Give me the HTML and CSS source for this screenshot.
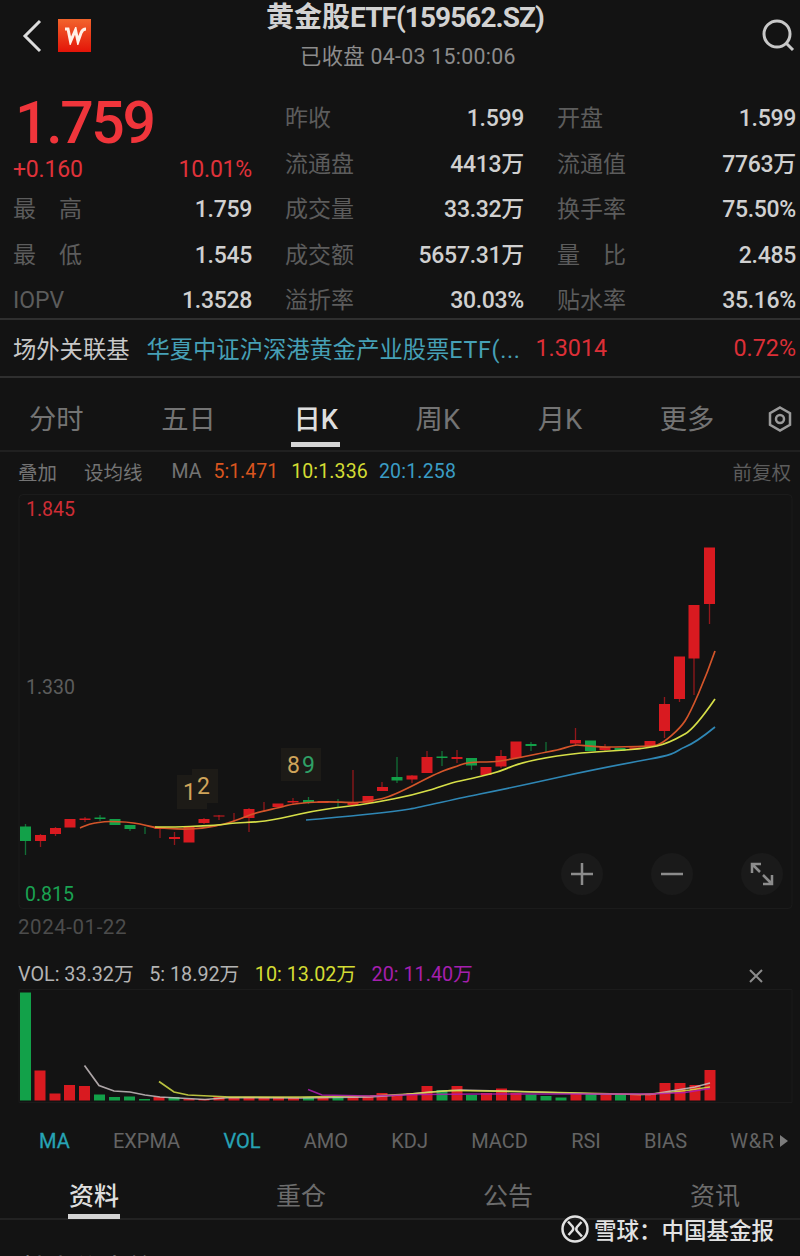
FILE: index.html
```html
<!DOCTYPE html>
<html lang="zh-CN">
<head>
    <meta charset="UTF-8">
    <title>黄金股ETF(159562.SZ)</title>
    <link rel="stylesheet" href="styles.css">
</head>
<body>

<header class="topbar">
    <div class="topbar-left">
        <svg class="back" width="20" height="34" viewBox="0 0 20 34"><path d="M18 2 3 17 18 32"/></svg>
        <div class="logo">
            <svg width="24" height="18" viewBox="0 0 24 18"><path d="M2 2H5L7.500 14.500 12.500 3 15 14.500 18 6Q19.500 2 23 2"/></svg>
        </div>
    </div>
    <div class="topbar-title">
        <h1>黄金股<span>ETF(159562.SZ)</span></h1>
        <p>已收盘 04-03 15:00:06</p>
    </div>
    <svg class="search" width="34" height="34" viewBox="0 0 34 34"><circle cx="15" cy="15" r="13"/><path d="M24 24 31 31"/></svg>
</header>

<section class="quote">
    <div class="col">
        <div class="price">1.759</div>
        <div class="row change"><span>+0.160</span><span>10.01%</span></div>
        <div class="row"><label class="wide2"><i>最</i><i>高</i></label><b>1.759</b></div>
        <div class="row"><label class="wide2"><i>最</i><i>低</i></label><b>1.545</b></div>
        <div class="row"><label>IOPV</label><b>1.3528</b></div>
    </div>
    <div class="col">
        <div class="row"><label>昨收</label><b>1.599</b></div>
        <div class="row"><label>流通盘</label><b>4413万</b></div>
        <div class="row"><label>成交量</label><b>33.32万</b></div>
        <div class="row"><label>成交额</label><b>5657.31万</b></div>
        <div class="row"><label>溢折率</label><b>30.03%</b></div>
    </div>
    <div class="col">
        <div class="row"><label>开盘</label><b>1.599</b></div>
        <div class="row"><label>流通值</label><b>7763万</b></div>
        <div class="row"><label>换手率</label><b>75.50%</b></div>
        <div class="row"><label class="wide2"><i>量</i><i>比</i></label><b>2.485</b></div>
        <div class="row"><label>贴水率</label><b>35.16%</b></div>
    </div>
</section>

<section class="fund">
    <span>场外关联基</span>
    <a class="fund-name">华夏中证沪深港黄金产业股票<span>ETF(...</span></a>
    <span class="up">1.3014</span>
    <span class="up fund-pct">0.72%</span>
</section>

<nav class="periods">
    <a>分时</a>
    <a>五日</a>
    <a class="active">日K</a>
    <a>周K</a>
    <a>月K</a>
    <a>更多</a>
    <svg width="24" height="26" viewBox="0 0 24 26"><path d="M12 1.500 22 7.250V18.750L12 24.500 2 18.750V7.250Z"/><circle cx="12" cy="13" r="4"/></svg>
</nav>

<div class="ma-line">
    <span>叠加</span>
    <span class="ma-set">设均线</span>
    <span class="ma-tag">MA</span>
    <span class="ma5">5:1.471</span>
    <span class="ma10">10:1.336</span>
    <span class="ma20">20:1.258</span>
    <span class="adjust">前复权</span>
</div>

<section class="kchart">
    <svg width="800" height="424" viewBox="0 490 800 424">
        <rect class="frame" x="19" y="494.500" width="773" height="414" rx="4"/>
        <rect class="mark-bg" x="177" y="775" width="30" height="34"/>
        <rect class="mark-bg" x="192" y="769" width="26" height="34"/>
        <rect class="mark-bg" x="281" y="748" width="40" height="33"/>

        <!-- wicks -->
        <path class="wick red" d="M40.500 834V847M55.500 827V836M85 817V822M160 827V838M174.500 832V845M204 818V824M219 815V820M234 813V822M249 808V832M264 802V812M293 798V805M353 770V805M382 782V791M412 775V783M427 751V773M457 750V763M501 750V768M575.500 728V746M605 744V751M664.500 697V738M679.500 657V702M694 605V695M709.500 548V624"/>
        <path class="wick green" d="M25.500 824V855M100 815V821M130 825V831M145 827V834M308.500 797V804M338 799V807M397 757V783M442 751V766M471.500 758V770M531 742V751M546 742V752"/>
        <!-- bodies -->
        <path class="body red" d="M40.500 835V841M55.500 828V834M70 819V827.500M85 818.500V820M160 827V829M174.500 837V839M189 826V842.500M204 819V823M219 815.500V816.500M249 809V818M278 803.500V807M293 801V802.500M323 801V803M353 802V805M368 796V803M382.500 787V791M412 775.500V779.500M427 757V773M457 757V759M486 767V775M501 756V766.500M516 741.500V758M575.500 740V743.500M605 747V750M635 747.500V749.500M650 741V747M664.500 704V731M679.500 656.500V699M694 605V658.500M709.500 547.500V604"/>
        <path class="body green" d="M25.500 826.500V841M100 817.500V819M115 819V825M130 825V829M308.500 800V803M397 777V780.500M442 756.500V758M471.500 758V765.500M531 744V746M590.500 740.500V751M620 748V751"/>

        <path class="line ma20" d="M306 820C330 818 350 816 370 814S398 811 410 809S455 799 480 794S533 783 560 777S620 764.500 650 759S675 751 685 747S704 736 715 727"/>
        <path class="line ma5" d="M80 828C85 826 88 824 95 823S105 821.500 110 821.500S130 822 140 824S153 828 160 828S175 829.500 190 829S210 827 220 825S240 819 250 815S275 809 285 806S307 802.500 320 802S343 802.500 355 802.500S373 800 380 799S402 791 410 787S435 774 443 771S455 767 460 765S472 762 480 762S494 762 500 761S530 755.500 537 754S550 751.500 557 750S572 745 577 745S595 747.500 610 747S650 747 657 745S679 730 685 721S705 680 715 651"/>
        <path class="line ma10" d="M155 827C170 827 178 827 190 826.500S220 825 230 823.500S252 823 265 821S287 817 300 814S332 808 350 806S380 801.500 393 799S420 793 430 790S450 783 460 781S478 777 490 774S505 769 513 766S537 759 557 756S592 752 610 751S645 748.500 657 746S678 738 685 734S704 715 715 699"/>

        <text class="mark gold" x="183" y="800">1</text>
        <text class="mark gold" x="197" y="794">2</text>
        <text class="mark gold" x="287" y="773">8</text>
        <text class="mark teal" x="302" y="773">9</text>
        <text class="axis high" x="26" y="516">1.845</text>
        <text class="axis mid" x="26" y="694">1.330</text>
        <text class="axis low" x="25" y="901">0.815</text>
    </svg>
    <div class="zoom-btns">
        <button><svg width="24" height="24" viewBox="0 0 24 24"><path d="M12 1V23M1 12H23"/></svg></button>
        <button><svg width="24" height="24" viewBox="0 0 24 24"><path d="M1 12H23"/></svg></button>
        <button><svg width="24" height="24" viewBox="0 0 24 24"><path d="M2 11V2H11M2 2 10 10M13 13 22 22M22 13V22H13"/></svg></button>
    </div>
</section>
<div class="date">2024-01-22</div>

<div class="vol-line">
    <span>VOL: 33.32万</span>
    <span>5: 18.92万</span>
    <span class="ma10">10: 13.02万</span>
    <span class="vol20">20: 11.40万</span>
    <svg width="14" height="14" viewBox="0 0 14 14"><path d="M1 1 13 13M13 1 1 13"/></svg>
</div>

<svg class="vchart" width="800" height="118" viewBox="0 988 800 118">
    <path class="frame" d="M19 989.500H792V1102.500H19Z"/>
    <path class="body red" d="M40 1100.500V1070.500M55 1100.500V1093.500M69.500 1100.500V1085M84.500 1100.500V1086M159 1100.500V1097M189 1100.500V1099M204 1100.500V1099M219 1100.500V1097M234 1100.500V1097M249 1100.500V1097M264 1100.500V1097M278.500 1100.500V1097M293.500 1100.500V1097.500M323 1100.500V1097M353 1100.500V1096.500M368 1100.500V1096M382 1100.500V1093M397 1100.500V1095M412 1100.500V1093M427 1100.500V1086M457 1100.500V1086M486.500 1100.500V1093M501.500 1100.500V1088.500M516 1100.500V1093M576 1100.500V1094M606 1100.500V1095M635.500 1100.500V1094M650.500 1100.500V1094M665 1100.500V1083M680 1100.500V1083M695 1100.500V1085M710 1100.500V1070"/>
    <path class="body green" d="M25.500 1100.500V992.500M99.500 1100.500V1094.500M114.500 1100.500V1097M129.500 1100.500V1096.500M144.500 1100.500V1099M174 1100.500V1097M308.500 1100.500V1097M338 1100.500V1097M442 1100.500V1090M471.500 1100.500V1095M531 1100.500V1094.500M546 1100.500V1096M561 1100.500V1097.500M591 1100.500V1094M620.500 1100.500V1094"/>
    <path class="line vol5" d="M84.500 1065.500 99 1085.500 114 1091 130 1092 145 1095 160 1097 205 1099.500 230 1097.500 300 1098 370 1097 400 1095 430 1092 460 1090 500 1091 550 1092.500 600 1094 650 1094.500 680 1089.500 695 1087 710 1083"/>
    <path class="line ma10" d="M159 1081.500 174 1092 188 1095 230 1097 300 1097 370 1096 410 1094 450 1090.500 520 1091.500 580 1093 640 1094.500 665 1093 690 1090 710 1087"/>
    <path class="line vol20" d="M308 1089.500 322 1095 370 1096 420 1094.500 480 1094 560 1094 650 1094 685 1092.500 710 1088.500"/>
</svg>

<nav class="indicators">
    <a class="on">MA</a>
    <a>EXPMA</a>
    <a class="on">VOL</a>
    <a>AMO</a>
    <a>KDJ</a>
    <a>MACD</a>
    <a>RSI</a>
    <a>BIAS</a>
    <a class="more">W&amp;R<svg width="8" height="12" viewBox="0 0 8 12"><path d="M0 0 8 6 0 12Z"/></svg></a>
</nav>

<nav class="info-tabs">
    <a class="active">资料</a>
    <a>重仓</a>
    <a>公告</a>
    <a>资讯</a>
</nav>
<div class="info-head">基本信息简况</div>

<div class="watermark">
    <svg width="28" height="28" viewBox="0 0 28 28">
        <circle cx="14" cy="14" r="12.500"/>
        <path d="M7 6.500 11.500 11.500Q13 13.500 11.500 15.500L7.500 20M20.500 7 16 12Q14.500 14 16 16L21 21.500"/>
    </svg>
    <span>雪球：</span><span>中国基金报</span>
</div>

</body>
</html>
```
FILE: styles.css
```css
* {
    box-sizing: border-box;
}
body {
    margin: 0;
    width: 800px;
    height: 1256px;
    overflow: hidden;
    position: relative;
    background: #131313;
    color: #c8c8c8;
    font-family: Roboto, "Noto Sans CJK SC", sans-serif;
}
svg {
    display: block;
    fill: none;
}

/* header */
.topbar {
    height: 76px;
    display: grid;
    grid-template-columns: 1fr auto 1fr;
    padding: 0 4px 0 22px;
}
.topbar-left {
    display: flex;
    align-items: flex-start;
    gap: 16px;
    padding-top: 19px;
}
.back {
    stroke: #dcdcdc;
    stroke-width: 3;
}
.logo {
    width: 33px;
    height: 33px;
    display: flex;
    align-items: center;
    justify-content: center;
    background: linear-gradient(#f2642c, #e41408);
}
.logo svg {
    stroke: #fff0e6;
    stroke-width: 3;
}
.topbar-title {
    text-align: center;
    margin-left: -8px;
}
.topbar-title h1 {
    margin: 0;
    font-size: 28px;
    line-height: 36px;
    font-weight: 700;
    color: #d2d2d2;
}
.topbar-title h1 span {
    letter-spacing: -0.950px;
}
.topbar-title p {
    margin: 6px 0 0 6px;
    font-size: 21.300px;
    line-height: 30px;
    letter-spacing: 0.300px;
    color: #8c8c8c;
}
.search {
    justify-self: end;
    margin-top: 19px;
    stroke: #c8c8c8;
    stroke-width: 3;
}

/* quote table */
.quote {
    height: 244px;
    padding: 25px 4px 0 13px;
    display: grid;
    grid-template-columns: repeat(3, 239px);
    column-gap: 33px;
    border-bottom: 2px solid #2f2f2f;
}
.col {
    display: flex;
    flex-direction: column;
    gap: 9.600px;
}
.row {
    display: flex;
    justify-content: space-between;
    font-size: 23px;
    line-height: 36px;
}
.row label {
    color: #5c5c5c;
}
.row b {
    font-weight: 500;
    letter-spacing: -0.300px;
    color: #d0d0d0;
}
.row .wide2 {
    width: 69px;
    display: flex;
    justify-content: space-between;
}
.wide2 i {
    font-style: normal;
}
.price {
    height: 43px;
    line-height: 44px;
    padding-left: 2px;
    font-size: 59px;
    font-weight: 500;
    letter-spacing: -2.400px;
    color: #f0353b;
}
.row.change {
    line-height: 32px;
    margin-bottom: -3px;
    letter-spacing: -0.200px;
    color: #e0323a;
}
.up {
    color: #dc2f37;
}

/* linked fund */
.fund {
    height: 58px;
    padding: 0 4px 0 13px;
    display: flex;
    align-items: center;
    font-size: 23.300px;
    border-bottom: 2px solid #2f2f2f;
}
.fund-name {
    margin-left: 17px;
    width: 389px;
    color: #46a0b6;
    white-space: nowrap;
}
.fund-name span {
    letter-spacing: 0.650px;
}
.fund-pct {
    margin-left: auto;
}

/* period tabs */
.periods {
    height: 74px;
    padding: 0 8px 0 29px;
    display: flex;
    justify-content: space-between;
    align-items: center;
    font-size: 27.300px;
    color: #747474;
    border-bottom: 2px solid #202020;
}
.periods a {
    height: 72px;
    line-height: 85px;
}
.periods svg {
    margin: 9px 0 0 -24px;
    stroke: #9a9a9a;
    stroke-width: 2.500;
}
.active {
    position: relative;
    color: #dedede;
    font-weight: 500;
}
.active::after {
    content: "";
    position: absolute;
    left: -2px;
    right: -2px;
    bottom: 3px;
    height: 5px;
    background: #d4d4d4;
}

/* moving averages */
.ma-line {
    height: 38px;
    padding: 0 9px 0 18px;
    display: flex;
    align-items: center;
    font-size: 19.500px;
    color: #747474;
}
.ma-set {
    margin-left: 27px;
}
.ma-tag {
    margin-left: 29px;
}
.ma-line .ma5 {
    margin-left: 12px;
    color: #d9551f;
}
.ma-line .ma10 {
    margin-left: 13px;
    letter-spacing: 0.150px;
    color: #d3dc33;
}
.ma-line .ma20 {
    margin-left: 11px;
    letter-spacing: 0.200px;
    color: #3a9cc4;
}
.adjust {
    margin-left: auto;
    color: #5c5c5c;
}

/* charts */
.kchart {
    position: relative;
    height: 424px;
}
.frame {
    stroke: #1b1b1b;
}
.red {
    stroke: #d91a20;
}
.green {
    stroke: #12a149;
}
.wick {
    stroke-width: 1.300;
    opacity: 0.650;
}
.body {
    stroke-width: 11;
}
.line {
    stroke-width: 1.700;
}
.line.ma5 {
    stroke: #d4552a;
}
.line.ma10 {
    stroke: #d6df48;
}
.line.ma20 {
    stroke: #2f87b5;
}
.line.vol5 {
    stroke: #c9bfc2;
}
.line.vol20 {
    stroke: #b01cb4;
}
.vchart .line {
    opacity: 0.850;
}
.mark-bg {
    fill: #1d1b17;
}
.mark {
    font-size: 23px;
}
.gold {
    fill: #cfa45a;
}
.teal {
    fill: #2fa066;
}
.axis {
    font-size: 19.500px;
}
.high {
    fill: #cf2d35;
}
.mid {
    fill: #5c5c5c;
}
.low {
    fill: #1aa352;
}
.zoom-btns {
    position: absolute;
    left: 561px;
    top: 363px;
    display: flex;
    gap: 48px;
}
.zoom-btns button {
    width: 42px;
    height: 42px;
    padding: 0;
    border: none;
    border-radius: 50%;
    background: #1a1a1a;
    display: flex;
    align-items: center;
    justify-content: center;
}
.zoom-btns svg {
    stroke: #8c8c8c;
    stroke-width: 2.500;
}
.date {
    height: 45px;
    padding-left: 18px;
    font-size: 20.500px;
    line-height: 27px;
    letter-spacing: 0.550px;
    color: #4c4c4c;
}
.vol-line {
    height: 29px;
    padding: 0 37px 2px 18px;
    display: flex;
    align-items: center;
    gap: 15.500px;
    font-size: 19.750px;
    color: #b4b4b4;
}
.vol-line .ma10 {
    color: #d3dc33;
}
.vol-line .vol20 {
    color: #a51fae;
}
.vol-line svg {
    margin: 6px 0 0 auto;
    stroke: #8c8c8c;
    stroke-width: 2;
}

/* indicator switcher */
.indicators {
    height: 70px;
    padding: 0 12px 0 39px;
    display: flex;
    justify-content: space-between;
    align-items: center;
    font-size: 20px;
    color: #646464;
}
.indicators .on {
    color: #27a3b5;
    -webkit-text-stroke: 0.300px #27a3b5;
}
.more {
    display: flex;
    align-items: center;
    gap: 5px;
    letter-spacing: 0.700px;
}
.more svg {
    fill: #7c7c7c;
}

/* bottom tabs */
.info-tabs {
    height: 44px;
    padding: 0 60px 0 69px;
    display: flex;
    justify-content: space-between;
    font-size: 25px;
    line-height: 42px;
    color: #6c6c6c;
    border-bottom: 2px solid #222;
}
.info-tabs .active::after {
    left: -1px;
    right: -1px;
    bottom: -1px;
}
.info-head {
    padding: 30px 0 0 20px;
    font-size: 27px;
    line-height: 40px;
}

.watermark {
    position: absolute;
    left: 561px;
    top: 1214px;
    height: 30px;
    display: flex;
    align-items: center;
    font-size: 22.500px;
    font-weight: 500;
    color: #e2e2e2;
}
.watermark svg {
    stroke: #e2e2e2;
    stroke-width: 2.500;
    margin-right: 5px;
}
```
